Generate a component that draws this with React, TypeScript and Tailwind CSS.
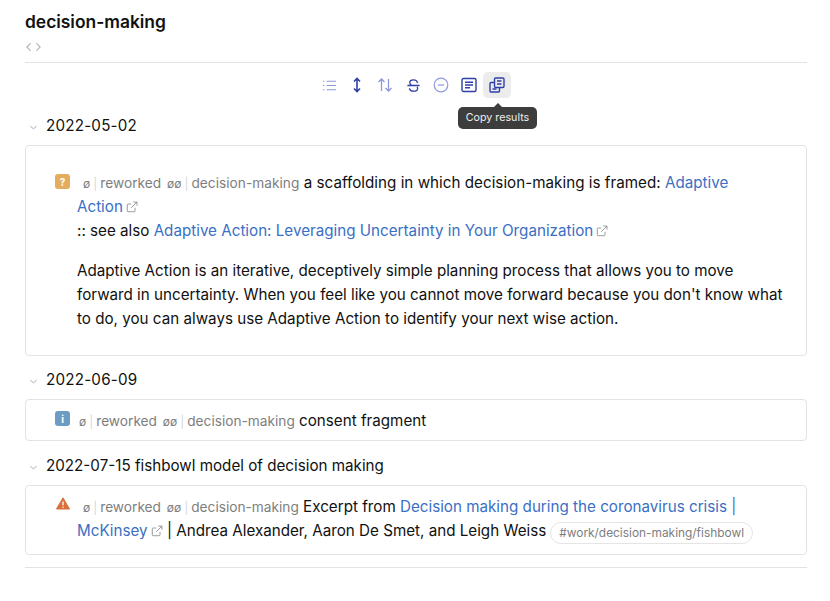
import React from "react";

const Ext = () => (
  <svg viewBox="0 0 14 14" className="inline-block w-[12px] h-[12px] ml-[3px] align-[-1px]" fill="none" stroke="#8a8a8a" strokeWidth="1">
    <path d="M10.500 8v3.500a1 1 0 0 1-1 1h-7a1 1 0 0 1-1-1v-7a1 1 0 0 1 1-1H6" />
    <path d="M8.500 1.200h4.300v4.300M12.800 1.200 6 8" />
  </svg>
);

const A = ({ children, ext = true }: { children: React.ReactNode; ext?: boolean }) => (
  <>
    <span className="text-[#3b6fc4]">{children}</span>
    {ext && <Ext />}
  </>
);

const Meta = () => (
  <span className="text-[13.7px] text-[#7e7e7e]">
    <span className="text-[12px] ml-[6px]">ø</span>
    <span className="text-[#d8d8d8] text-[12px] mx-[3px]">|</span>
    reworked <span className="text-[12px] ml-[2px]">øø</span>
    <span className="text-[#d8d8d8] text-[12px] mx-[3px]">|</span>
    decision-making
  </span>
);

const Chevron = () => (
  <svg viewBox="0 0 10 10" className="w-[9px] h-[9px] mr-[8px] mt-[2px]" fill="none" stroke="#a3a3a3" strokeWidth="1">
    <path d="M1.500 3.500 5 6.500l3.500-3" />
  </svg>
);

const Heading = ({ children, className }: { children: React.ReactNode; className: string }) => (
  <div className={`flex items-center pl-[4px] pt-[2px] h-[24px] text-[15.2px] text-[#111] ${className}`}>
    <Chevron />
    {children}
  </div>
);

const Badge = ({ bg, ch }: { bg: string; ch: string }) => (
  <span className={`flex items-center justify-center w-[15px] h-[15px] rounded-[3px] text-white text-[10px] font-bold ${bg}`}>{ch}</span>
);

const Light = "#8d99dd";
const Dark = "#2f3fa8";

const Tool = ({ children, active }: { children: React.ReactNode; active?: boolean }) => (
  <div className={`flex items-center justify-center w-[28px] h-[26px] rounded-[5px] ${active ? "bg-[#ececec]" : ""}`}>{children}</div>
);

export default function App() {
  return (
    <div className="w-[830px] h-[601px] bg-white px-[25px] pt-[10px] font-['Inter','Liberation_Sans',sans-serif] text-[15.2px] text-[#111] overflow-hidden">
      <div className="text-[17.4px] font-semibold leading-[24px]">decision-making</div>
      <div className="h-[29px] border-b border-[#e3e3e3] w-[782px] pt-[8px]">
        <svg viewBox="0 0 18 10" className="w-[17px] h-[10px]" fill="none" stroke="#b5b5b5" strokeWidth="1.200">
          <path d="M6 1 2 5l4 4M12 1l4 4-4 4" />
        </svg>
      </div>

      <div className="relative flex justify-center mt-[9px] w-[776px] h-[26px]">
        <Tool>
          <svg viewBox="0 0 16 16" className="w-[15px] h-[15px]" fill="none" stroke={Light} strokeWidth="1.100">
            <path d="M5 3.500h10M5 8h10M5 12.500h10M1 3.500h1.500M1 8h1.500M1 12.500h1.500" />
          </svg>
        </Tool>
        <Tool>
          <svg viewBox="0 0 16 16" className="w-[16px] h-[16px]" fill="none" stroke={Dark} strokeWidth="1.600">
            <path d="M8 1.500v13M5 4.500l3-3 3 3M5 11.500l3 3 3-3" />
          </svg>
        </Tool>
        <Tool>
          <svg viewBox="0 0 16 16" className="w-[16px] h-[16px]" fill="none" stroke={Light} strokeWidth="1.300">
            <path d="M4.500 14V2M1.500 5l3-3 3 3M11.500 2v12M8.500 11l3 3 3-3" />
          </svg>
        </Tool>
        <Tool>
          <svg viewBox="0 0 16 16" className="w-[15px] h-[15px]" fill="none" stroke={Dark} strokeWidth="1.400">
            <path d="M1.500 8h13M12.300 5.200C12 3.300 10.400 2 8 2 5.600 2 4 3.200 4 5c0 1.400.8 2.400 2.500 3M11.800 9.500c.4.500.6 1 .6 1.600 0 1.800-1.800 2.900-4.400 2.900-2.400 0-4-1.100-4.400-3" />
          </svg>
        </Tool>
        <Tool>
          <svg viewBox="0 0 16 16" className="w-[16px] h-[16px]" fill="none" stroke={Light} strokeWidth="1.200">
            <circle cx="8" cy="8" r="6.800" />
            <path d="M4.800 8h6.400" />
          </svg>
        </Tool>
        <Tool>
          <svg viewBox="0 0 16 16" className="w-[16px] h-[16px]" fill="none" stroke={Dark} strokeWidth="1.400">
            <rect x="1" y="1.500" width="14" height="13" rx="1.500" />
            <path d="M4 5.200h8M4 8h8M4 10.800h5" />
          </svg>
        </Tool>
        <Tool active>
          <svg viewBox="0 0 16 16" className="w-[16px] h-[16px]" fill="none" stroke={Dark} strokeWidth="1.400">
            <rect x="5.500" y="1" width="9.500" height="9.500" rx="1.200" />
            <path d="M5.500 5.500H2.200A1.200 1.200 0 0 0 1 6.700v7.100A1.200 1.200 0 0 0 2.200 15h7.100a1.200 1.200 0 0 0 1.200-1.200v-3.300" />
            <path d="M8 4h4.500M8 7h4.500M3.500 12h4" />
          </svg>
        </Tool>
        <div className="absolute left-[433px] top-[35px] w-[79px] h-[22px] rounded-[5px] bg-[#3d3d3d] text-[#ededed] text-[10.7px] flex items-center justify-center">
          <span className="absolute top-[-4px] left-[36px] w-0 h-0 border-x-[4px] border-x-transparent border-b-[4px] border-b-[#3d3d3d]" />
          Copy results
        </div>
      </div>

      <Heading className="mt-[15px] tracking-[0.2px]">2022-05-02</Heading>
      <div className="relative mt-[8px] w-[782px] h-[211px] border border-[#e3e3e3] rounded-[4px] pl-[51px] pr-[16px] pt-[26px] leading-[24px]">
        <span className="absolute left-[29px] top-[28px]"><Badge bg="bg-[#e3ad5c]" ch="?" /></span>
        <div className="leading-[22px] tracking-[0.02px]">
          <Meta /> a scaffolding in which decision-making is framed: <A ext={false}>Adaptive</A>
        </div>
        <div>
          <A>Action</A>
          <br />
          :: see also <A>Adaptive Action: Leveraging Uncertainty in Your Organization</A>
        </div>
        <p className="mt-[16px]">
          Adaptive Action is an iterative, deceptively simple planning process that allows you to move<br />
          forward in uncertainty. When you feel like you cannot move forward because you don't know what<br />
          to do, you can always use Adaptive Action to identify your next wise action.
        </p>
      </div>

      <Heading className="mt-[11px] tracking-[0.2px]">2022-06-09</Heading>
      <div className="relative mt-[8px] w-[782px] h-[42px] border border-[#e3e3e3] rounded-[4px] pl-[47px] pt-[9px] leading-[24px]">
        <span className="absolute left-[29px] top-[11px]"><Badge bg="bg-[#6c9bc4]" ch="i" /></span>
        <Meta /> consent fragment
      </div>

      <Heading className="mt-[12px]">2022-07-15 fishbowl model of decision making</Heading>
      <div className="relative mt-[8px] w-[782px] h-[70px] border border-[#e3e3e3] rounded-[4px] pl-[51px] pt-[9px] leading-[24px]">
        <span className="absolute left-[30px] top-[11px]">
          <svg viewBox="0 0 14 13" className="w-[14px] h-[13px]">
            <path d="M7 .800 13.500 12H.500z" fill="#d9703a" stroke="#d9703a" strokeLinejoin="round" />
            <path d="M7 4.500v3.800M7 9.500v1.200" stroke="#fff" strokeWidth="1.300" />
          </svg>
        </span>
        <div>
          <Meta /> Excerpt from <A ext={false}>Decision making during the coronavirus crisis |</A>
        </div>
        <div className="-mt-[1px]">
          <A>McKinsey</A> | Andrea Alexander, Aaron De Smet, and Leigh Weiss
          <span className="inline-block ml-[4px] px-[8px] h-[22px] -my-[4px] leading-[20px] border border-[#e5e5e5] rounded-full text-[11.9px] text-[#7e7e7e] align-[-1px]">#work/decision-making/fishbowl</span>
        </div>
      </div>
      <div className="mt-[12px] w-[782px] border-b border-[#e3e3e3]" />
    </div>
  );
}
